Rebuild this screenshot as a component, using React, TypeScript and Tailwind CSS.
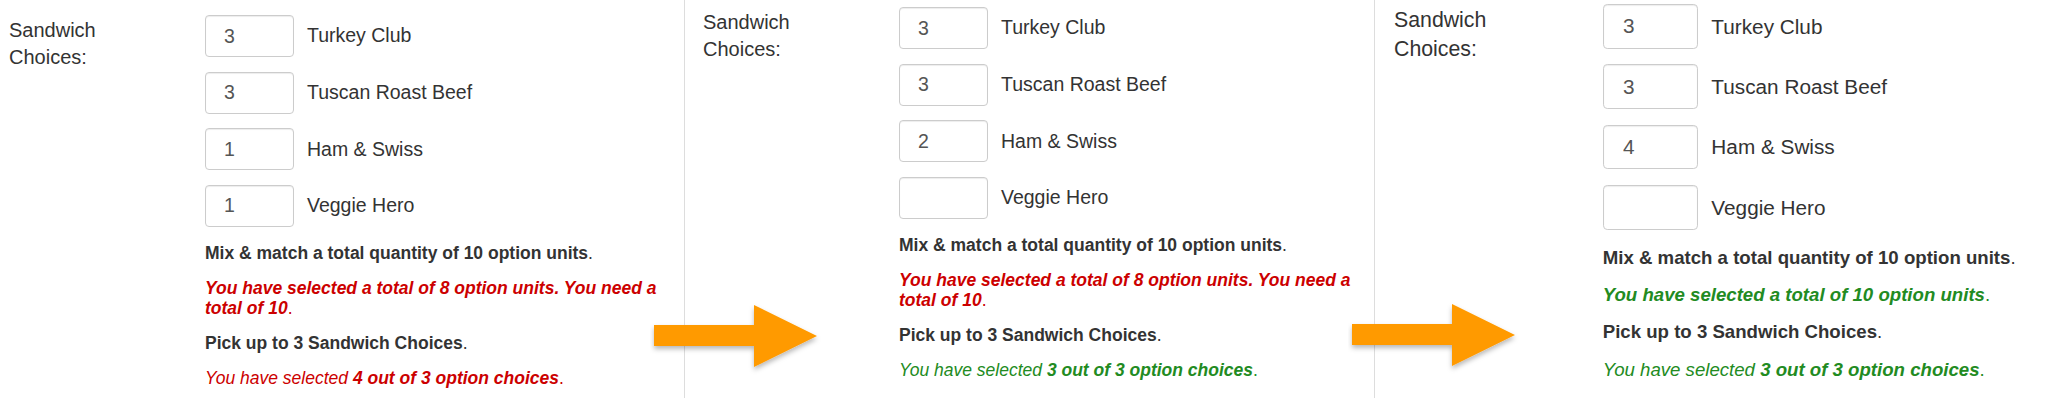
import React from 'react';

const sandwiches = ['Turkey Club', 'Tuscan Roast Beef', 'Ham & Swiss', 'Veggie Hero'];

const Arrow = ({ className, id }: { className: string; id: string }) => (
  <svg className={className} width="175" height="78" viewBox="0 0 175 78">
    <defs>
      <filter id={id} x="-10%" y="-20%" width="120%" height="150%">
        <feDropShadow dx="0" dy="3" stdDeviation="2.5" floodColor="#000" floodOpacity="0.28" />
      </filter>
    </defs>
    <polygon points="4,25 104,25 104,5 167,36 104,67 104,46 4,46" fill="#ff9a00" filter={`url(#${id})`} />
  </svg>
);

const QtyRow = ({ name, value }: { name: string; value: string }) => (
  <div className="flex items-center gap-[13px]">
    <input
      type="text"
      readOnly
      value={value}
      className="h-[42px] w-[89px] rounded-[4px] border border-[#cccccc] bg-white pl-[18px] text-[19.5px] text-[#555] shadow-[inset_0_1px_1px_rgba(0,0,0,0.075)] outline-none"
    />
    <span className="text-[19.5px] text-[#333]">{name}</span>
  </div>
);

const Form = ({ values, children }: { values: string[]; children: React.ReactNode }) => (
  <div className="grid grid-cols-[196px_475px]">
    <div className="pt-[2px] text-[20px] leading-[27px] text-[#333]">
      Sandwich
      <br />
      Choices:
    </div>
    <div>
      <div className="flex flex-col gap-[14.67px]">
        {sandwiches.map((name, i) => (
          <QtyRow key={name} name={name} value={values[i]} />
        ))}
      </div>
      <div className="mt-[16px] flex flex-col gap-[14.5px] text-[17.5px] leading-[20.5px] text-[#333]">
        {children}
      </div>
    </div>
  </div>
);

const MixRule = () => (
  <p>
    <b>Mix &amp; match a total quantity of 10 option units</b>.
  </p>
);

const PickRule = () => (
  <p>
    <b>Pick up to 3 Sandwich Choices</b>.
  </p>
);

const ShortUnits = () => (
  <p className="text-[#cc0000]">
    <em>
      <b>You have selected a total of 8 option units. You need a total of 10</b>
    </em>
    .
  </p>
);

export default function App() {
  return (
    <div className="relative flex h-[405px] w-[2048px] overflow-hidden bg-white font-['Liberation_Sans',Arial,sans-serif]">
      <div className="h-[398px] w-[685px] shrink-0 border-r border-[#dddddd] pl-[9px] pt-[15px]">
        <Form values={['3', '3', '1', '1']}>
          <MixRule />
          <ShortUnits />
          <PickRule />
          <p className="text-[#cc0000]">
            <em>
              You have selected <b>4 out of 3 option choices</b>
            </em>
            .
          </p>
        </Form>
      </div>

      <div className="h-[398px] w-[690px] shrink-0 border-r border-[#dddddd] pl-[18px] pt-[7px]">
        <Form values={['3', '3', '2', '']}>
          <MixRule />
          <ShortUnits />
          <PickRule />
          <p className="text-[#228b22]">
            <em>
              You have selected <b>3 out of 3 option choices</b>
            </em>
            .
          </p>
        </Form>
      </div>

      <div className="h-[398px] flex-1 pl-[19px] pt-[4px]">
        <div className="[zoom:1.065]">
          <Form values={['3', '3', '4', '']}>
            <MixRule />
            <p className="text-[#228b22]">
              <em>
                <b>You have selected a total of 10 option units</b>
              </em>
              .
            </p>
            <PickRule />
            <p className="text-[#228b22]">
              <em>
                You have selected <b>3 out of 3 option choices</b>
              </em>
              .
            </p>
          </Form>
        </div>
      </div>

      <Arrow id="arrow-shadow-1" className="absolute left-[650px] top-[300px]" />
      <Arrow id="arrow-shadow-2" className="absolute left-[1348px] top-[299px]" />
    </div>
  );
}
